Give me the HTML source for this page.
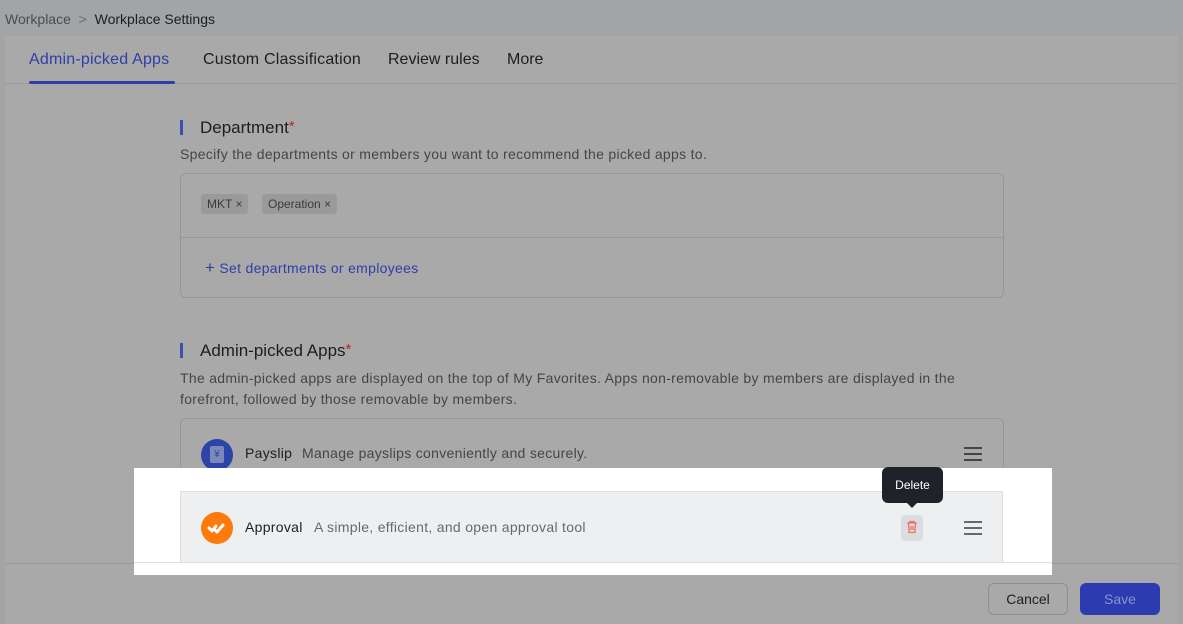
<!DOCTYPE html>
<html><head><meta charset="utf-8"><style>
*{box-sizing:border-box;margin:0;padding:0}
body{width:1183px;height:624px;overflow:hidden;background:#a3a4a6;font-family:"Liberation Sans",sans-serif;position:relative}
.a{position:absolute;white-space:nowrap}
.s{letter-spacing:0.3px}
</style></head><body>
<div class="a" style="left:5px;top:11px;font-size:14px;color:#4a4b4d">Workplace <span style="color:#6a6b6d">&nbsp;&gt;&nbsp;</span> <span style="color:#1c1d1f">Workplace Settings</span></div>
<div class="a" style="left:5px;top:36px;width:1173px;height:588px;background:#a9a9a9"></div>
<div class="a" style="left:5px;top:83px;width:1173px;height:1px;background:#9a9a9b"></div>
<div class="a" style="left:29px;top:51px;font-size:16px;color:#2d3fa8;letter-spacing:0.2px">Admin-picked Apps</div>
<div class="a" style="left:29px;top:81px;width:146px;height:3px;background:#2d3fa8;border-radius:2px"></div>
<div class="a" style="left:203px;top:51px;font-size:16px;color:#1c1d1f;letter-spacing:0.2px">Custom Classification</div>
<div class="a" style="left:388px;top:51px;font-size:16px;color:#1c1d1f">Review rules</div>
<div class="a" style="left:507px;top:51px;font-size:16px;color:#1c1d1f">More</div>

<div class="a" style="left:180px;top:120px;width:3px;height:15px;background:#3a4fb5"></div>
<div class="a" style="left:200px;top:118px;font-size:17px;color:#1c1d1f">Department<span style="color:#b12c2a;vertical-align:top;font-size:15px">*</span></div>
<div class="a s" style="left:180px;top:146px;font-size:14px;color:#444547">Specify the departments or members you want to recommend the picked apps to.</div>
<div class="a" style="left:180px;top:173px;width:824px;height:125px;border:1px solid #979798;border-radius:6px"></div>
<div class="a" style="left:181px;top:237px;width:822px;height:1px;background:#979798"></div>
<div class="a" style="left:201px;top:194px;height:20px;padding:0 6px;background:#9a9a9b;border-radius:3px;font-size:12px;line-height:20px;color:#3a3b3d">MKT ×</div>
<div class="a" style="left:262px;top:194px;height:20px;padding:0 6px;background:#9a9a9b;border-radius:3px;font-size:12px;line-height:20px;color:#3a3b3d">Operation ×</div>
<div class="a s" style="left:205px;top:260px;font-size:14px;color:#2d3fa8"><span style="font-size:17px;line-height:14px">+</span> Set departments or employees</div>

<div class="a" style="left:180px;top:343px;width:3px;height:15px;background:#3a4fb5"></div>
<div class="a" style="left:200px;top:341px;font-size:17px;color:#1c1d1f">Admin-picked Apps<span style="color:#b12c2a;vertical-align:top;font-size:15px">*</span></div>
<div class="a s" style="left:180px;top:368px;font-size:14px;line-height:21px;color:#444547;white-space:normal;width:790px">The admin-picked apps are displayed on the top of My Favorites. Apps non-removable by members are displayed in the forefront, followed by those removable by members.</div>
<div class="a" style="left:180px;top:418px;width:824px;height:150px;border:1px solid #979798;border-radius:6px"></div>
<div class="a" style="left:201px;top:439px;width:32px;height:32px;border-radius:50%;background:#2c44a8"></div>
<div class="a" style="left:210px;top:446px;width:14px;height:17px;border-radius:2px;background:#7d88b8;color:#2c44a8;font-size:10px;text-align:center;line-height:17px">¥</div>
<div class="a s" style="left:245px;top:445px;font-size:14px;color:#1c1d1f">Payslip</div>
<div class="a s" style="left:302px;top:445px;font-size:14px;color:#444547">Manage payslips conveniently and securely.</div>
<div class="a" style="left:964px;top:447px;width:18px;height:2px;background:#444548;box-shadow:0 6px 0 #444548,0 12px 0 #444548"></div>
<div class="a" style="left:5px;top:563px;width:1173px;height:61px;background:#a9a9a9;border-top:1px solid #979798"></div>

<div class="a" style="left:134px;top:468px;width:918px;height:107px;background:#fff"></div>
<div class="a" style="left:180px;top:491px;width:823px;height:71px;background:#eeeff1;border-top:1px solid #dedfe2;border-left:1px solid #dedfe2;border-right:1px solid #dedfe2"></div>
<div class="a" style="left:134px;top:562px;width:918px;height:1px;background:#dedfe2"></div>
<div class="a" style="left:201px;top:512px;width:32px;height:32px;border-radius:50%;background:#ff7a0a"></div>
<svg class="a" style="left:201px;top:512px" width="32" height="32"><path d="M8 16l3 3 4-5M14 18l2 2 6-7" stroke="#fff" stroke-width="3" fill="none" stroke-linecap="round" stroke-linejoin="round"/></svg>
<div class="a s" style="left:245px;top:519px;font-size:14px;color:#1c1d1f">Approval</div>
<div class="a s" style="left:314px;top:519px;font-size:14px;color:#646a73">A simple, efficient, and open approval tool</div>
<div class="a" style="left:901px;top:515px;width:22px;height:26px;background:#dcdde0;border-radius:4px"></div>
<svg class="a" style="left:904px;top:519px" width="16" height="16"><path d="M3 4h10M6 4V2.5h4V4M4.5 4l.7 9.5h5.6l.7-9.5M7 7v4M9 7v4" stroke="#f76964" stroke-width="1.3" fill="none"/></svg>
<div class="a" style="left:964px;top:521px;width:18px;height:2px;background:#646a73;box-shadow:0 6px 0 #646a73,0 12px 0 #646a73"></div>
<div class="a" style="left:882px;top:467px;width:61px;height:36px;background:#1f2329;border-radius:6px;color:#fff;font-size:12px;text-align:center;line-height:36px">Delete</div>
<div class="a" style="left:906px;top:502px;width:0;height:0;border-left:6px solid transparent;border-right:6px solid transparent;border-top:6px solid #1f2329"></div>

<div class="a" style="left:988px;top:583px;width:80px;height:32px;border:1px solid #8f8f90;border-radius:6px;font-size:14px;color:#1c1d1f;text-align:center;line-height:30px">Cancel</div>
<div class="a" style="left:1080px;top:583px;width:80px;height:32px;background:#2c3bb0;border-radius:6px;font-size:14px;color:#8a93cf;text-align:center;line-height:32px">Save</div>
</body></html>
